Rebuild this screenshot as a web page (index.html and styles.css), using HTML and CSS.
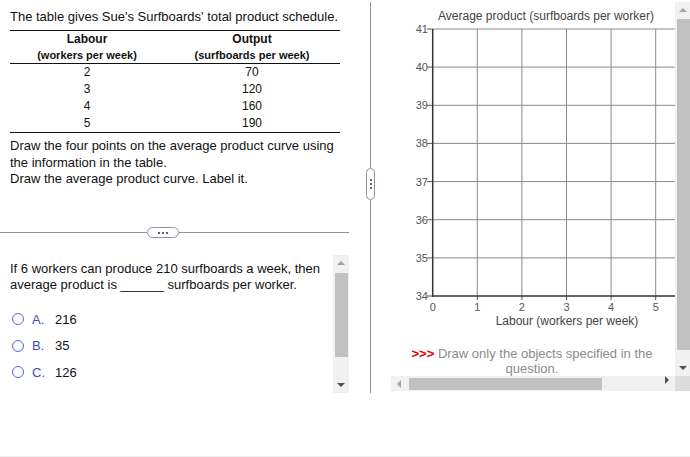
FILE: index.html
```html
<!DOCTYPE html>
<html>
<head>
<meta charset="utf-8">
<link rel="stylesheet" href="styles.css">
</head>
<body>
<div class="app">
  <div class="left">
    <div class="top">
      <p class="intro">The table gives Sue's Surfboards' total product schedule.</p>
      <table class="sched">
        <thead>
          <tr><th class="c1"><span class="h1">Labour</span><span class="h2">(workers per week)</span></th>
              <th class="c2"><span class="h1">Output</span><span class="h2">(surfboards per week)</span></th></tr>
        </thead>
        <tbody>
          <tr><td>2</td><td>70</td></tr>
          <tr><td>3</td><td>120</td></tr>
          <tr><td>4</td><td>160</td></tr>
          <tr><td>5</td><td>190</td></tr>
        </tbody>
      </table>
      <p class="instr">Draw the four points on the average product curve using the information in the table.<br>Draw the average product curve. Label it.</p>
    </div>
    <div class="hdiv"><div class="hhandle"><i></i><i></i><i></i></div></div>
    <div class="bottom">
      <div class="qarea">
        <p class="question">If 6 workers can produce 210 surfboards a week, then average product is ______ surfboards per worker.</p>
        <div class="opt"><span class="radio"></span><span class="letter">A.</span><span class="val">216</span></div>
        <div class="opt"><span class="radio"></span><span class="letter">B.</span><span class="val">35</span></div>
        <div class="opt"><span class="radio"></span><span class="letter">C.</span><span class="val">126</span></div>
      </div>
      <div class="vscroll small">
        <div class="arr up dim"></div>
        <div class="thumb lthumb"></div>
        <div class="fill"></div>
        <div class="arr down"></div>
      </div>
    </div>
  </div>
  <div class="vdiv"><div class="vline"></div><div class="vhandle"><i></i><i></i><i></i></div></div>
  <div class="right">
    <div class="viewport">
      <svg class="graph" width="284" height="343" viewBox="391 2 284 343">
        <text class="title" x="546" y="20">Average product (surfboards per worker)</text>
        <g class="grid">
          <line x1="433" y1="29" x2="680" y2="29"/>
          <line x1="433" y1="67.1" x2="680" y2="67.1"/>
          <line x1="433" y1="105.3" x2="680" y2="105.3"/>
          <line x1="433" y1="143.4" x2="680" y2="143.4"/>
          <line x1="433" y1="181.6" x2="680" y2="181.6"/>
          <line x1="433" y1="219.7" x2="680" y2="219.7"/>
          <line x1="433" y1="257.9" x2="680" y2="257.9"/>
          <line x1="477.3" y1="29" x2="477.3" y2="296"/>
          <line x1="521.9" y1="29" x2="521.9" y2="296"/>
          <line x1="566.5" y1="29" x2="566.5" y2="296"/>
          <line x1="611.1" y1="29" x2="611.1" y2="296"/>
          <line x1="655.7" y1="29" x2="655.7" y2="296"/>
        </g>
        <g class="ticks">
          <line x1="427" y1="29" x2="433" y2="29"/>
          <line x1="427" y1="67.1" x2="433" y2="67.1"/>
          <line x1="427" y1="105.3" x2="433" y2="105.3"/>
          <line x1="427" y1="143.4" x2="433" y2="143.4"/>
          <line x1="427" y1="181.6" x2="433" y2="181.6"/>
          <line x1="427" y1="219.7" x2="433" y2="219.7"/>
          <line x1="427" y1="257.9" x2="433" y2="257.9"/>
          <line x1="427" y1="296" x2="433" y2="296"/>
          <line x1="477.3" y1="296" x2="477.3" y2="300"/>
          <line x1="521.9" y1="296" x2="521.9" y2="300"/>
          <line x1="566.5" y1="296" x2="566.5" y2="300"/>
          <line x1="611.1" y1="296" x2="611.1" y2="300"/>
          <line x1="655.7" y1="296" x2="655.7" y2="300"/>
        </g>
        <g class="axes">
          <line x1="432.7" y1="29" x2="432.7" y2="296.7"/>
          <line x1="432" y1="296" x2="680" y2="296"/>
        </g>
        <g class="ylab">
          <text x="428" y="33">41</text>
          <text x="428" y="71">40</text>
          <text x="428" y="109">39</text>
          <text x="428" y="147">38</text>
          <text x="428" y="186">37</text>
          <text x="428" y="224">36</text>
          <text x="428" y="262">35</text>
          <text x="428" y="300">34</text>
        </g>
        <g class="xlab">
          <text x="432.7" y="311">0</text>
          <text x="477.3" y="311">1</text>
          <text x="521.9" y="311">2</text>
          <text x="566.5" y="311">3</text>
          <text x="611.1" y="311">4</text>
          <text x="655.7" y="311">5</text>
        </g>
        <text class="xtitle" x="567" y="325">Labour (workers per week)</text>
      </svg>
      <p class="note"><span class="red">&gt;&gt;&gt;</span> Draw only the objects specified in the question.</p>
    </div>
    <div class="vscroll big">
      <div class="arr up dim"></div>
      <div class="thumb rthumb"></div>
      <div class="fill"></div>
      <div class="arr down"></div>
    </div>
    <div class="hscroll">
      <div class="harr left dim"></div>
      <div class="hthumb"></div>
      <div class="hfill"></div>
      <div class="harr right"></div>
    </div>
    <div class="corner"></div>
  </div>
</div>
</body>
</html>
```
FILE: styles.css
```css
html, body {
  margin: 0;
  padding: 0;
  background: #fff;
}
body {
  font-family: "Liberation Sans", Arial, sans-serif;
  color: #111;
}
.app {
  display: flex;
  height: 456px;
  border-bottom: 1px solid #efefef;
  box-sizing: content-box;
}
.left {
  width: 350px;
  display: flex;
  flex-direction: column;
}
.top {
  height: 232px;
  padding: 9px 10px 0 10px;
  box-sizing: border-box;
}
.intro {
  margin: 0;
  font-size: 13px;
  line-height: 16px;
}
.sched {
  margin-top: 5px;
  width: 330px;
  border-collapse: collapse;
  border-top: 1px solid #111;
  border-bottom: 1px solid #111;
}
.sched th {
  font-weight: bold;
  padding: 0;
  border-bottom: 1px solid #111;
  text-align: center;
}
.sched .c1 { width: 154px; }
.sched .h1 {
  display: block;
  font-size: 12px;
  line-height: 16px;
}
.sched .h2 {
  display: block;
  font-size: 11px;
  line-height: 16px;
}
.sched td {
  padding: 0;
  height: 17px;
  font-size: 12px;
  line-height: 17px;
  text-align: center;
}
.instr {
  margin: 5px 0 0 0;
  font-size: 13px;
  line-height: 16.5px;
}
.hdiv {
  height: 1px;
  width: 349px;
  background: #8c93a3;
  position: relative;
}
.hhandle {
  position: absolute;
  left: 147px;
  top: -5px;
  width: 30px;
  height: 9px;
  border: 1px solid #8c93a3;
  border-radius: 6px;
  background: #fff;
  display: flex;
  justify-content: center;
  align-items: center;
  gap: 2px;
}
.hhandle i, .vhandle i {
  display: block;
  width: 2px;
  height: 2px;
  background: #5b6172;
}
.bottom {
  padding-top: 22px;
  display: flex;
  height: 160px;
  box-sizing: border-box;
}
.qarea {
  width: 333px;
  padding-left: 10px;
  box-sizing: border-box;
}
.question {
  margin: 6px 0 13px 0;
  font-size: 13px;
  line-height: 16px;
}
.opt {
  display: flex;
  align-items: center;
  height: 26.5px;
  font-size: 13px;
}
.radio {
  width: 10px;
  height: 10px;
  border: 1.3px solid #5468d4;
  border-radius: 50%;
  margin-left: 2px;
  margin-right: 8px;
}
.letter {
  color: #3a4cc0;
  width: 23px;
}
.val { color: #111; }

.vscroll {
  display: flex;
  flex-direction: column;
  align-items: center;
  background: #f1f1f1;
}
.vscroll.small {
  width: 16px;
  height: 138px;
}
.vscroll.big {
  width: 15px;
}
.arr {
  width: 0;
  height: 0;
  border-left: 4px solid transparent;
  border-right: 4px solid transparent;
  margin: 6px 0;
  flex: none;
}
.arr.up { border-bottom: 4px solid #505050; }
.arr.down { border-top: 4px solid #505050; }
.arr.up.dim { border-bottom-color: #a3a3a3; }
.thumb {
  background: #c1c1c1;
  width: 13px;
  flex: none;
}
.lthumb { height: 84px; margin-top: 2px; }
.rthumb { height: 331px; margin-top: 1px; margin-left: 2px; }
.fill { flex: 1; }

.vdiv {
  width: 41px;
  position: relative;
  padding-top: 2px;
  box-sizing: border-box;
}
.vline {
  margin-left: 20px;
  width: 1px;
  height: 391px;
  background: #8c93a3;
}
.vhandle {
  position: absolute;
  left: 16px;
  top: 168px;
  width: 7px;
  height: 30px;
  border: 1px solid #8c93a3;
  border-radius: 6px;
  background: #fff;
  display: flex;
  flex-direction: column;
  justify-content: center;
  align-items: center;
  gap: 2px;
}

.right {
  width: 299px;
  margin-top: 2px;
  display: grid;
  grid-template-columns: 284px 15px;
  grid-template-rows: 374px 15px;
  align-self: flex-start;
}
.viewport {
  overflow: hidden;
  position: relative;
}
.graph {
  display: block;
  font-family: "Liberation Sans", Arial, sans-serif;
}
.graph .title {
  font-size: 12px;
  fill: #444;
  text-anchor: middle;
}
.graph .grid line {
  stroke: #8a8a8a;
  stroke-width: 1;
}
.graph .ticks line {
  stroke: #555;
  stroke-width: 1;
}
.graph .axes line {
  stroke: #333;
  stroke-width: 1.5;
}
.graph .ylab text {
  font-size: 11px;
  fill: #555;
  text-anchor: end;
}
.graph .xlab text {
  font-size: 11px;
  fill: #555;
  text-anchor: middle;
}
.graph .xtitle {
  font-size: 12px;
  fill: #444;
  text-anchor: middle;
}
.note {
  margin: 1px 0 0 11px;
  width: 260px;
  text-align: center;
  font-size: 13px;
  line-height: 15px;
  color: #8a8a8a;
}
.red { color: #e00000; font-weight: bold; }

.hscroll {
  background: #f1f1f1;
  display: flex;
  align-items: center;
}
.harr {
  width: 0;
  height: 0;
  border-top: 4px solid transparent;
  border-bottom: 4px solid transparent;
  margin: 0 6px;
  flex: none;
}
.harr.left { border-right: 4px solid #a3a3a3; }
.harr.right { border-left: 4px solid #505050; }
.hthumb {
  width: 193px;
  height: 12px;
  background: #c1c1c1;
  margin-left: 2px;
}
.hfill { flex: 1; }
.corner { background: #dcdcdc; }
```
